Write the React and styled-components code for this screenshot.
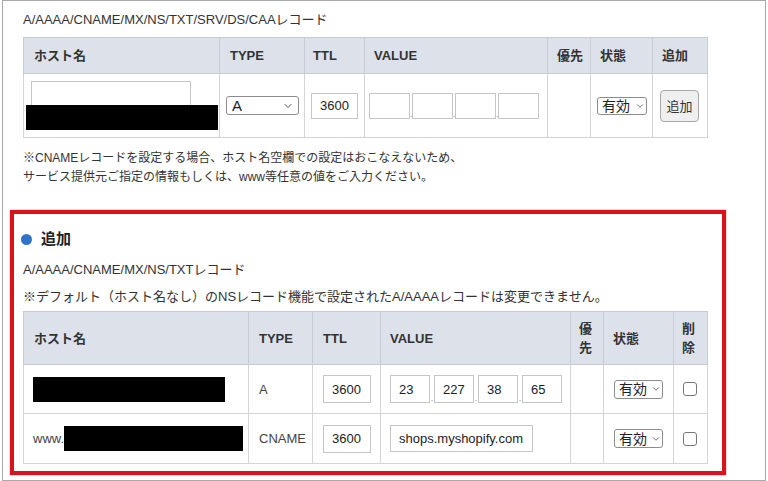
import React from 'react';
import styled, { createGlobalStyle } from 'styled-components';
import { ChevronDown } from 'lucide-react';

const GlobalStyle = createGlobalStyle`
  html, body {
    margin: 0;
    padding: 0;
    background: #fff;
  }
  body {
    font-family: "Liberation Sans", "Noto Sans CJK JP", sans-serif;
    color: #333;
  }
`;

const Frame = styled.div`
  box-sizing: border-box;
  margin-left: 2px;
  width: 764px;
  height: 481px;
  border: 1px solid #a9a9a9;
  padding-top: 10px;
  overflow: hidden;
`;

const Section = styled.div`
  padding-left: 20px;
`;

const Caption = styled.div`
  font-size: 13px;
  line-height: 18px;
  margin-top: ${p => p.$top || 0}px;
  margin-bottom: ${p => p.$bottom || 0}px;
`;

const Notes = styled.div`
  font-size: 12px;
  line-height: 19px;
  margin-top: 11px;
`;

const Highlight = styled.div`
  box-sizing: border-box;
  margin-left: 7px;
  margin-top: 23px;
  width: 716px;
  border: 4px solid #d7141c;
  box-shadow: 0 0 1px #d7141c;
  padding: 15px 0 7px 9px;
`;

const Heading = styled.div`
  display: flex;
  align-items: center;
  gap: 9px;
  margin-left: -2px;
  font-size: 15px;
  font-weight: bold;
  line-height: 20px;
  color: #222;
`;

const Dot = styled.span`
  width: 11px;
  height: 11px;
  border-radius: 50%;
  background: #2f73c9;
`;

const Table = styled.table`
  border-collapse: collapse;
  table-layout: fixed;
  width: 685px;
  margin-top: ${p => p.$top || 0}px;
`;

const Th = styled.th`
  background: #dde2ea;
  border: 1px solid #c8ccd2;
  text-align: left;
  font-size: 13px;
  font-weight: bold;
  color: #333;
  padding: 0 0 0 ${p => p.$pad ?? 9}px;
  line-height: 17px;
`;

const HeadRow = styled.tr`
  height: ${p => p.$h}px;
`;

const Row = styled.tr`
  height: ${p => p.$h}px;
`;

const Td = styled.td`
  border: 1px solid #d2d4d8;
  padding: 0 0 0 ${p => p.$pad ?? 9}px;
  font-size: 13px;
  color: #444;
  vertical-align: middle;
  position: ${p => (p.$rel ? 'relative' : 'static')};
`;

const TextInput = styled.input`
  box-sizing: border-box;
  width: ${p => p.$w}px;
  height: ${p => p.$h || 27}px;
  border: 1px solid #c6c6c6;
  border-radius: 0;
  padding: 0 0 0 8px;
  font-family: "Liberation Sans", "Noto Sans CJK JP", sans-serif;
  font-size: 13px;
  color: #222;
  outline: none;
  background: #fff;
`;

const HostInput = styled(TextInput)`
  display: block;
  margin-top: 7px;
  margin-bottom: 26px;
`;

const Redact = styled.div`
  background: #000;
  height: 25px;
  width: ${p => p.$w}px;
`;

const RedactOver = styled(Redact)`
  position: absolute;
  left: 2px;
  top: 31px;
`;

const HostLine = styled.div`
  display: flex;
  align-items: center;
  font-size: 13px;
  color: #444;
`;

const IpGroup = styled.div`
  display: flex;
  align-items: flex-end;
`;

const IpDot = styled.span`
  width: ${p => p.$w}px;
  text-align: center;
  font-size: 9px;
  line-height: 9px;
  color: #888;
`;

const SelectWrap = styled.span`
  position: relative;
  display: inline-block;
  vertical-align: middle;
`;

const Select = styled.select`
  appearance: none;
  -webkit-appearance: none;
  box-sizing: border-box;
  display: block;
  width: ${p => p.$w}px;
  height: ${p => p.$h}px;
  border: 1px solid #8c8c8c;
  border-radius: 3px;
  background: #fff;
  padding: 0 0 0 ${p => p.$pl ?? 4}px;
  font-family: "Liberation Sans", "Noto Sans CJK JP", sans-serif;
  font-size: ${p => p.$fs || 14}px;
  line-height: 1;
  color: #222;
  outline: none;
`;

const Chevron = styled(ChevronDown)`
  position: absolute;
  right: ${p => p.$r ?? 5}px;
  top: 50%;
  transform: translateY(-50%);
  pointer-events: none;
  color: #555;
`;

const AddButton = styled.button`
  box-sizing: border-box;
  width: 39px;
  height: 32px;
  border: 1px solid #a8a8a8;
  border-radius: 4px;
  background: #efefef;
  font-family: "Liberation Sans", "Noto Sans CJK JP", sans-serif;
  font-size: 13px;
  color: #333;
  padding: 0;
`;

const Check = styled.span`
  display: block;
  box-sizing: border-box;
  width: 14px;
  height: 14px;
  border: 1px solid #777;
  border-radius: 3px;
  background: #fff;
`;

const Stack = styled.span`
  display: block;
  line-height: 19px;
`;

function Dropdown({ value, w, h, fs, pl, r, size = 12 }) {
  return (
    <SelectWrap>
      <Select $w={w} $h={h} $fs={fs} $pl={pl} defaultValue={value}>
        <option>{value}</option>
      </Select>
      <Chevron size={size} strokeWidth={2} $r={r} />
    </SelectWrap>
  );
}

function IpInputs({ values, w, h, gap }) {
  return (
    <IpGroup>
      {values.map((v, i) => (
        <React.Fragment key={i}>
          {i > 0 && <IpDot $w={gap}>.</IpDot>}
          <TextInput $w={w} $h={h} defaultValue={v} />
        </React.Fragment>
      ))}
    </IpGroup>
  );
}

export default function App() {
  return (
    <>
      <GlobalStyle />
      <Frame>
        <Section>
          <Caption $bottom={8}>A/AAAA/CNAME/MX/NS/TXT/SRV/DS/CAAレコード</Caption>
          <Table>
            <colgroup>
              <col style={{ width: 196 }} />
              <col style={{ width: 85 }} />
              <col style={{ width: 60 }} />
              <col style={{ width: 183 }} />
              <col style={{ width: 43 }} />
              <col style={{ width: 62 }} />
              <col style={{ width: 55 }} />
            </colgroup>
            <thead>
              <HeadRow $h={36}>
                <Th $pad={10}>ホスト名</Th>
                <Th $pad={10}>TYPE</Th>
                <Th $pad={8}>TTL</Th>
                <Th>VALUE</Th>
                <Th>優先</Th>
                <Th>状態</Th>
                <Th>追加</Th>
              </HeadRow>
            </thead>
            <tbody>
              <Row $h={63}>
                <Td $pad={7} $rel>
                  <HostInput $w={160} $h={30} />
                  <RedactOver $w={192} />
                </Td>
                <Td $pad={6}>
                  <Dropdown value="A" w={73} h={19} fs={15} pl={5} r={5} />
                </Td>
                <Td $pad={6}>
                  <TextInput $w={47} $h={26} defaultValue="3600" />
                </Td>
                <Td $pad={4}>
                  <IpInputs values={['', '', '', '']} w={41} h={26} gap={2} />
                </Td>
                <Td />
                <Td $pad={6}>
                  <Dropdown value="有効" w={50} h={18} fs={14} pl={4} r={2} size={10} />
                </Td>
                <Td $pad={7}>
                  <AddButton>追加</AddButton>
                </Td>
              </Row>
            </tbody>
          </Table>
          <Notes>
            ※CNAMEレコードを設定する場合、ホスト名空欄での設定はおこなえないため、
            <br />
            サービス提供元ご指定の情報もしくは、www等任意の値をご入力ください。
          </Notes>
        </Section>

        <Highlight>
          <Heading>
            <Dot />
            追加
          </Heading>
          <Caption $top={12}>A/AAAA/CNAME/MX/NS/TXTレコード</Caption>
          <Caption $top={9}>
            ※デフォルト（ホスト名なし）のNSレコード機能で設定されたA/AAAAレコードは変更できません。
          </Caption>
          <Table $top={5}>
            <colgroup>
              <col style={{ width: 225 }} />
              <col style={{ width: 64 }} />
              <col style={{ width: 68 }} />
              <col style={{ width: 190 }} />
              <col style={{ width: 33 }} />
              <col style={{ width: 70 }} />
              <col style={{ width: 34 }} />
            </colgroup>
            <thead>
              <HeadRow $h={53}>
                <Th $pad={10}>ホスト名</Th>
                <Th $pad={10}>TYPE</Th>
                <Th $pad={10}>TTL</Th>
                <Th $pad={9}>VALUE</Th>
                <Th $pad={8}>
                  <Stack>優</Stack>
                  <Stack>先</Stack>
                </Th>
                <Th $pad={9}>状態</Th>
                <Th $pad={8}>
                  <Stack>削</Stack>
                  <Stack>除</Stack>
                </Th>
              </HeadRow>
            </thead>
            <tbody>
              <Row $h={49}>
                <Td $pad={9}>
                  <Redact $w={192} />
                </Td>
                <Td $pad={10}>A</Td>
                <Td $pad={10}>
                  <TextInput $w={48} $h={28} defaultValue="3600" />
                </Td>
                <Td $pad={9}>
                  <IpInputs values={['23', '227', '38', '65']} w={40} h={28} gap={4} />
                </Td>
                <Td />
                <Td $pad={10}>
                  <Dropdown value="有効" w={49} h={19} fs={14} pl={4} r={2} size={10} />
                </Td>
                <Td $pad={9}>
                  <Check />
                </Td>
              </Row>
              <Row $h={50}>
                <Td $pad={9}>
                  <HostLine>
                    www.
                    <Redact $w={179} />
                  </HostLine>
                </Td>
                <Td $pad={10}>CNAME</Td>
                <Td $pad={10}>
                  <TextInput $w={48} $h={28} defaultValue="3600" />
                </Td>
                <Td $pad={9}>
                  <TextInput $w={143} $h={27} defaultValue="shops.myshopify.com" />
                </Td>
                <Td />
                <Td $pad={10}>
                  <Dropdown value="有効" w={49} h={19} fs={14} pl={4} r={2} size={10} />
                </Td>
                <Td $pad={9}>
                  <Check />
                </Td>
              </Row>
            </tbody>
          </Table>
        </Highlight>
      </Frame>
    </>
  );
}
